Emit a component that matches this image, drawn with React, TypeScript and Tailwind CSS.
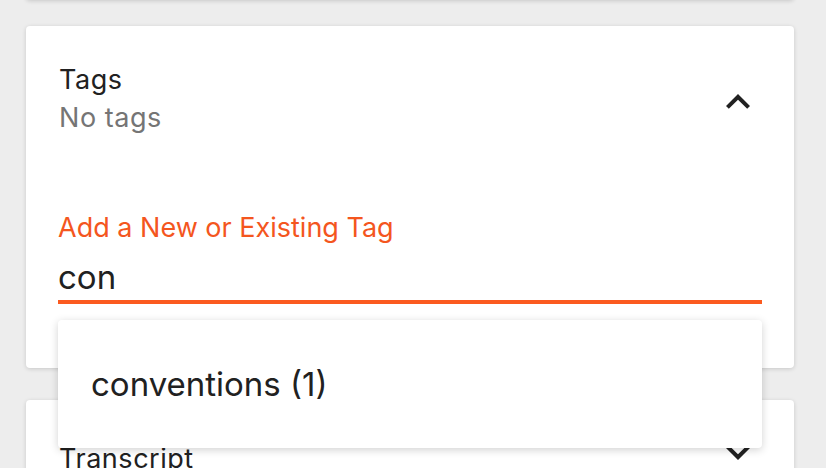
import React from 'react';

function ExpandLess() {
  return (
    <svg className="w-12 h-12 shrink-0 text-[#212121]" viewBox="0 0 24 24" fill="currentColor">
      <path d="M12 8l-6 6 1.41 1.41L12 10.83l4.59 4.58L18 14z" />
    </svg>
  );
}

function ExpandMore() {
  return (
    <svg className="w-12 h-12 shrink-0 text-[#212121]" viewBox="0 0 24 24" fill="currentColor">
      <path d="M16.59 8.59L12 13.17 7.41 8.59 6 10l6 6 6-6z" />
    </svg>
  );
}

export default function App() {
  return (
    <div className="w-[826px] h-[468px] overflow-hidden bg-[#ededed] pl-[26px] pr-[32px] flex flex-col font-['Inter',sans-serif]">
      {/* previous card, only its bottom edge shows */}
      <div className="h-[40px] -mt-[40px] shrink-0 bg-white rounded shadow-[0_1px_4px_rgba(0,0,0,0.16)]" />

      {/* Tags card */}
      <div className="relative mt-[26px] shrink-0 bg-white rounded shadow-[0_1px_4px_rgba(0,0,0,0.16)] pb-[64px] z-10">
        <div className="flex items-start justify-between pl-[33px] pr-[32px] pt-[35px]">
          <div className="text-[27px] leading-[38px] tracking-[0.02em]">
            <p className="text-[#212121]">Tags</p>
            <p className="text-[#757575]">No tags</p>
          </div>
          <div className="mt-[17px]">
            <ExpandLess />
          </div>
        </div>

        <div className="relative mx-[32px] mt-[72px]">
          <label className="block text-[27px] leading-[38px] text-[#f4561e]">Add a New or Existing Tag</label>
          <div className="mt-[8px] pb-px text-[33px] leading-[44px] text-[#212121]">con</div>
          <div className="h-[4px] bg-[#fb5a1f]" />

          {/* autocomplete menu */}
          <div className="absolute left-0 right-0 top-[calc(100%+16px)] h-[128px] flex items-center pl-[33px] bg-white rounded shadow-[0_2px_8px_rgba(0,0,0,0.18)]">
            <span className="text-[33px] leading-[44px] text-[#212121]">conventions (1)</span>
          </div>
        </div>
      </div>

      {/* Transcript card */}
      <div className="mt-[32px] h-[104px] shrink-0 flex items-center justify-between pl-[33px] pr-[32px] bg-white rounded shadow-[0_1px_4px_rgba(0,0,0,0.16)]">
        <p className="mt-[14px] text-[27px] leading-[38px] tracking-[0.02em] text-[#212121]">Transcript</p>
        <ExpandMore />
      </div>
    </div>
  );
}
